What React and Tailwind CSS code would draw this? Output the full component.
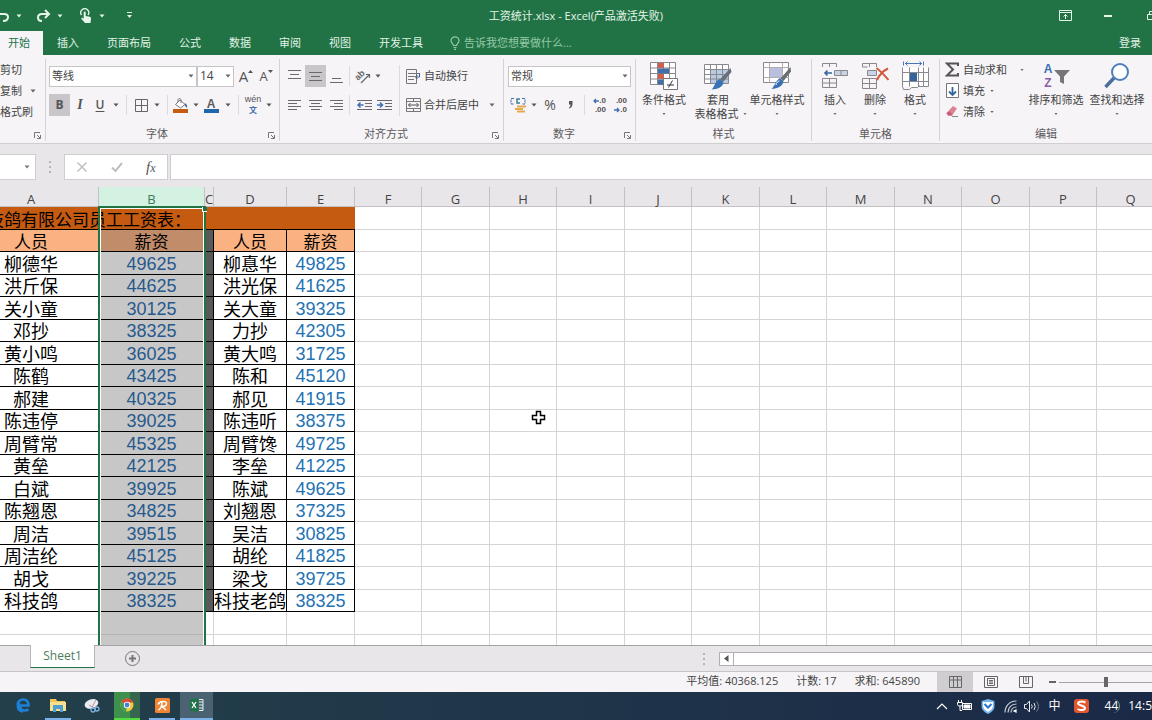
import { useState } from "react";
import { clsx } from "clsx";

const columns = ["A", "B", "C", "D", "E", "F", "G", "H", "I", "J", "K", "L", "M", "N", "O", "P", "Q"];
const emptyColumns = columns.slice(5);

const staff = [
  ["柳德华", 49625, "柳惪华", 49825],
  ["洪斤保", 44625, "洪光保", 41625],
  ["关小童", 30125, "关大童", 39325],
  ["邓抄", 38325, "力抄", 42305],
  ["黄小鸣", 36025, "黄大鸣", 31725],
  ["陈鹤", 43425, "陈和", 45120],
  ["郝建", 40325, "郝见", 41915],
  ["陈违停", 39025, "陈违听", 38375],
  ["周臂常", 45325, "周臂馋", 49725],
  ["黄垒", 42125, "李垒", 41225],
  ["白斌", 39925, "陈斌", 49625],
  ["陈翘恩", 34825, "刘翘恩", 37325],
  ["周洁", 39515, "吴洁", 30825],
  ["周洁纶", 45125, "胡纶", 41825],
  ["胡戈", 39225, "梁戈", 39725],
  ["科技鸽", 38325, "科技老鸽", 38325],
];

const tabs = ["插入", "页面布局", "公式", "数据", "审阅", "视图", "开发工具"];

/* ================= SMALL PARTS ================= */
function Caret({ className = "w-3" }) {
  return (
    <svg viewBox="0 0 12 6" className={clsx("h-[6px] shrink-0", className)} fill="currentColor" aria-hidden="true">
      <path d="M3.5 1.5h5L6 4.5z" />
    </svg>
  );
}

function TinyCaret() {
  return (
    <svg viewBox="0 0 6 4" className="h-1 w-[6px] shrink-0" fill="#666" aria-hidden="true">
      <path d="M1.5 1h3L3 3z" />
    </svg>
  );
}

function Divider({ className = "mx-1" }) {
  return <span className={clsx("h-5 w-px shrink-0 bg-[#dcdadd]", className)} />;
}

function IconButton({ label, className = "w-5", active, children }) {
  return (
    <button
      type="button"
      aria-label={label}
      className={clsx("flex h-[22px] shrink-0 items-center justify-center", active && "bg-[#c8c6c9]", className)}
    >
      {children}
    </button>
  );
}

function BigButton({ label, label2, className, children }) {
  return (
    <button type="button" className={clsx("flex shrink-0 flex-col items-center leading-[14px] whitespace-nowrap", className)}>
      <span className="mb-[2px] flex h-[30px] items-center">{children}</span>
      <span>{label}</span>
      <span className="flex h-[14px] items-center gap-[3px]">
        {label2}
        <TinyCaret />
      </span>
    </button>
  );
}

function Group({ title, launcher, className, children }) {
  return (
    <section className={clsx("flex shrink-0 flex-col border-r border-[#d5d3d6]", className)}>
      <div className="min-h-0 flex-1">{children}</div>
      <div className="flex h-[15px] items-center text-[#5c5a5d]">
        <span className="flex-1 text-center leading-[15px]">{title}</span>
        {launcher && (
          <button type="button" aria-label={title + "设置"} className="mr-1 pt-1">
            <svg width="7" height="7" viewBox="0 0 7 7" fill="none" stroke="#77757a" aria-hidden="true">
              <path d="M.5 6V.5H6M3 3l3 3M6.500 3v3.500H3" />
            </svg>
          </button>
        )}
      </div>
    </section>
  );
}

function DropDown({ label, value, options, onChange, className }) {
  return (
    <span className={clsx("relative flex h-[22px] items-center", className)}>
      <select
        aria-label={label}
        value={value}
        onChange={(e) => onChange(e.target.value)}
        className="h-[21px] w-full appearance-none rounded-none border border-[#c6c4c8] bg-white pl-[2px] text-[#444] outline-none"
      >
        {options.map((o) => (
          <option key={o}>{o}</option>
        ))}
      </select>
      <Caret className="pointer-events-none absolute right-0 w-3 text-[#666]" />
    </span>
  );
}

function Lines({ rows }) {
  return (
    <svg width="14" height="13" viewBox="0 0 14 13" stroke="#6b696d" aria-hidden="true">
      {rows.map(([x1, x2, y]) => (
        <path key={y} d={`M${x1} ${y + 0.5}H${x2}`} />
      ))}
    </svg>
  );
}

/* ================= TITLE BAR ================= */
function TitleBar() {
  return (
    <header className="grid h-[31px] shrink-0 grid-cols-[1fr_auto_1fr] items-center overflow-hidden text-[#e6f5e9]">
      <div className="flex items-center">
        <button type="button" aria-label="撤消" className="flex w-[13px] items-center">
          <svg width="10" height="14" viewBox="0 0 10 14" fill="none" stroke="currentColor" strokeWidth="2" aria-hidden="true">
            <path d="M-4 5h8c3 0 4 1.500 4 3s-1 4-5 4" />
          </svg>
        </button>
        <Caret />
        <button type="button" aria-label="恢复" className="ml-2 flex w-[21px] justify-center">
          <svg width="15" height="14" viewBox="0 0 15 14" fill="none" stroke="currentColor" strokeWidth="2" aria-hidden="true">
            <path d="M12 5H6C3 5 2 6.500 2 8.500S3.500 12 6 12" />
            <path d="M9 1l4 4-4 4" />
          </svg>
        </button>
        <Caret />
        <button type="button" aria-label="触摸/鼠标模式" className="ml-[10px] flex w-5 justify-center">
          <svg width="14" height="16" viewBox="0 0 14 16" aria-hidden="true">
            <path d="M2.500 7a4 4 0 1 1 6.500 0" fill="none" stroke="currentColor" strokeWidth="1.300" />
            <path d="M4.700 4.500c0-1.300 2-1.300 2 0V8l4 .8c1 .3 1.300.8 1.300 1.700L11.500 15H6L2.500 11c-.6-1 .5-1.700 1.200-1l1 .8z" fill="currentColor" />
          </svg>
        </button>
        <Caret />
        <button type="button" aria-label="自定义快速访问工具栏" className="ml-[15px] flex w-3 justify-center">
          <svg width="7" height="7" viewBox="0 0 7 7" fill="currentColor" aria-hidden="true">
            <path d="M1 0h5v1H1zM1 3h5L3.500 6z" />
          </svg>
        </button>
      </div>
      <h1>工资统计.xlsx - Excel(产品激活失败)</h1>
      <div className="flex items-center justify-end">
        <button type="button" aria-label="功能区显示选项" className="mr-8">
          <svg width="13" height="11" viewBox="0 0 13 11" fill="none" stroke="currentColor" aria-hidden="true">
            <path d="M.5.5h12v10H.5zM.5 2.500h12M6.500 9V4.500M4.500 6.500l2-2 2 2" />
          </svg>
        </button>
        <button type="button" aria-label="最小化" className="mr-[34px] flex h-3 w-[9px] items-center">
          <span className="h-[2px] w-2 bg-[#e6f5e9]" />
        </button>
        <button type="button" aria-label="还原" className="w-[5px] overflow-hidden">
          <svg width="11" height="11" viewBox="0 0 11 11" className="max-w-none" fill="none" stroke="currentColor" aria-hidden="true">
            <path d="M.5 4.500h7v5h-7zM2.500 4V1.500h7v5H8" />
          </svg>
        </button>
      </div>
    </header>
  );
}

function TabBar() {
  return (
    <nav className="flex h-6 shrink-0 items-stretch text-[#e2f3e5]">
      <button type="button" className="bg-[#f6f4f7] pr-[13px] pl-2 text-[#217346]">开始</button>
      {tabs.map((t) => (
        <button key={t} type="button" className="px-[14px]">
          {t}
        </button>
      ))}
      <label className="ml-[13px] flex items-center gap-1 text-[#95c9a5]">
        <svg width="10" height="14" viewBox="0 0 10 14" fill="none" stroke="currentColor" strokeWidth="1.200" aria-hidden="true">
          <path d="M3.500 9.500C3.500 8 1 7 1 4.800a4 4 0 0 1 8 0C9 7 6.500 8 6.500 9.500zM3.500 11.500h3M4 13.300h2" />
        </svg>
        <input
          type="text"
          aria-label="操作说明搜索"
          placeholder="告诉我您想要做什么..."
          className="w-32 bg-transparent outline-none placeholder:text-[#95c9a5]"
        />
      </label>
      <a href="#login" className="mr-[11px] ml-auto self-center">登录</a>
    </nav>
  );
}

/* ================= RIBBON ================= */
function FontGroup() {
  const [font, setFont] = useState("等线");
  const [size, setSize] = useState("14");
  return (
    <Group title="字体" launcher className="w-[234px]">
      <div className="flex flex-col gap-[7px] pt-[6px] pl-[3px]">
        <div className="flex">
          <DropDown label="字体" value={font} options={["等线", "宋体", "黑体"]} onChange={setFont} className="w-[148px]" />
          <DropDown label="字号" value={size} options={["11", "12", "14"]} onChange={setSize} className="w-[37px] text-[12px]" />
          <IconButton label="增大字号" className="ml-[2px] w-5 text-[#555]">
            <span className="text-[15px] leading-5">A</span>
            <svg width="5" height="14" viewBox="0 0 5 14" fill="#555" aria-hidden="true">
              <path d="M0 4h5L2.500 1z" />
            </svg>
          </IconButton>
          <IconButton label="减小字号" className="w-5 text-[#555]">
            <span className="text-[13px] leading-5">A</span>
            <svg width="5" height="14" viewBox="0 0 5 14" fill="#555" aria-hidden="true">
              <path d="M0 1h5L2.500 4z" />
            </svg>
          </IconButton>
        </div>
        <div className="flex items-center text-[#555]">
          <IconButton label="加粗" active className="w-[21px]"><b className="text-[12px]">B</b></IconButton>
          <IconButton label="倾斜"><i className="font-['Liberation_Serif',serif] text-[14px] font-bold">I</i></IconButton>
          <IconButton label="下划线"><span className="text-[12px] font-semibold underline underline-offset-2">U</span></IconButton>
          <Caret />
          <Divider />
          <IconButton label="边框">
            <svg width="13" height="13" viewBox="0 0 13 13" fill="none" stroke="#666" aria-hidden="true">
              <path d="M.5.5h12v12H.5zM6.500.5v12M.5 6.500h12" />
            </svg>
          </IconButton>
          <Caret />
          <Divider />
          <IconButton label="填充颜色" className="w-[18px]">
            <svg width="16" height="15" viewBox="0 0 16 15" aria-hidden="true">
              <path d="M0 11h15v4H0z" fill="#c55a11" />
              <path d="M2.500 6.500L7 2l5 4.500L7.500 10z" fill="#fff" stroke="#777" />
              <path d="M5 4V2c0-2 3-2 3 0v3" fill="none" stroke="#777" />
              <path d="M12 5c2 1 2.500 3 2 5l-2-2z" fill="#4a6fa5" />
            </svg>
          </IconButton>
          <Caret />
          <IconButton label="字体颜色">
            <svg width="16" height="16" viewBox="0 0 16 16" className="font-['Liberation_Sans',sans-serif]" aria-hidden="true">
              <path d="M0 12h15v4H0z" fill="#1f66ad" />
              <text x="7" y="11" textAnchor="middle" fontSize="12" fontWeight="700" fill="#5a5a60">A</text>
            </svg>
          </IconButton>
          <Caret />
          <Divider />
          <IconButton label="显示拼音字段" className="w-5 flex-col">
            <span className="font-['Liberation_Sans',sans-serif] text-[9px] leading-[10px]">wén</span>
            <span className="font-['Noto_Sans_CJK_SC',sans-serif] text-[8px] leading-[12px] font-bold text-[#3f6fb0]">文</span>
          </IconButton>
          <Caret />
        </div>
      </div>
    </Group>
  );
}

function AlignGroup() {
  return (
    <Group title="对齐方式" launcher className="w-[224px]">
      <div className="flex pt-[6px] pl-1">
        <div className="flex w-[116px] flex-col gap-[7px] border-r border-[#dcdadd] text-[#555]">
          <div className="flex items-center">
            <IconButton label="顶端对齐" className="w-[21px]"><Lines rows={[[0, 13, 0], [2, 11, 4], [0, 13, 8]]} /></IconButton>
            <IconButton label="垂直居中" active className="w-[21px]"><Lines rows={[[0, 13, 2], [2, 11, 6], [0, 13, 10]]} /></IconButton>
            <IconButton label="底端对齐" className="w-[21px]"><Lines rows={[[2, 11, 8], [0, 13, 12]]} /></IconButton>
            <Divider className="mx-[2px]" />
            <IconButton label="方向" className="w-5">
              <svg width="20" height="18" viewBox="0 0 20 18" fill="none" stroke="#666" strokeWidth="1.200" className="font-['Liberation_Sans',sans-serif]" aria-hidden="true">
                <text transform="translate(6 14) rotate(-45)" fontSize="9" fontWeight="700" fill="#666" stroke="none">ab</text>
                <path d="M9 16L17.500 7.500M14 7.500h3.500V11" />
              </svg>
            </IconButton>
            <Caret />
          </div>
          <div className="flex items-center">
            <IconButton label="左对齐" className="w-[21px]"><Lines rows={[[0, 13, 1], [0, 9, 4], [0, 13, 7], [0, 9, 10]]} /></IconButton>
            <IconButton label="居中" className="w-[21px]"><Lines rows={[[0, 13, 1], [2, 11, 4], [0, 13, 7], [2, 11, 10]]} /></IconButton>
            <IconButton label="右对齐" className="w-[21px]"><Lines rows={[[0, 13, 1], [4, 13, 4], [0, 13, 7], [4, 13, 10]]} /></IconButton>
            <Divider className="mx-[2px]" />
            <IconButton label="减少缩进量" className="w-6">
              <svg width="15" height="13" viewBox="0 0 15 13" fill="none" stroke="#6b696d" aria-hidden="true">
                <path d="M0 1.500h15M8 4.500h7M8 7.500h7M0 10.500h15" />
                <path d="M6.500 6H1M3.500 3.500L1 6l2.500 2.500" stroke="#3f6fb0" strokeWidth="1.500" />
              </svg>
            </IconButton>
            <IconButton label="增加缩进量" className="w-4">
              <svg width="15" height="13" viewBox="0 0 15 13" fill="none" stroke="#6b696d" aria-hidden="true">
                <path d="M0 1.500h15M8 4.500h7M8 7.500h7M0 10.500h15" />
                <path d="M0 6h5.500M3 3.500L5.500 6 3 8.500" stroke="#3f6fb0" strokeWidth="1.500" />
              </svg>
            </IconButton>
          </div>
        </div>
        <div className="flex flex-col gap-[7px] pl-[6px]">
          <button type="button" className="flex h-[22px] items-center gap-[3px]">
            <svg width="15" height="15" viewBox="0 0 15 15" fill="none" stroke="#77757a" aria-hidden="true">
              <path d="M.5.5h10v14H.5zM2 4.500h11M2 7.500h7M2 10.500h6" />
              <path d="M13.500 4v4H9.500M11.500 6L9.500 8l2 2" stroke="#3f5f95" />
            </svg>
            自动换行
          </button>
          <button type="button" className="flex h-[22px] items-center gap-[3px]">
            <svg width="15" height="14" viewBox="0 0 15 14" fill="none" stroke="#77757a" aria-hidden="true">
              <path d="M.5.5h14v13H.5zM.5 3.500h14M.5 10.500h14M7.500.5v3M7.500 10.500v3" />
              <path d="M2.500 7h10M4.500 5l-2 2 2 2M10.500 5l2 2-2 2" stroke="#555" />
            </svg>
            合并后居中
            <Caret className="ml-1 w-3 text-[#666]" />
          </button>
        </div>
      </div>
    </Group>
  );
}

function NumberGroup() {
  const [format, setFormat] = useState("常规");
  return (
    <Group title="数字" launcher className="w-[132px]">
      <div className="flex flex-col gap-[7px] pt-[6px] pr-1 pl-1">
        <DropDown label="数字格式" value={format} options={["常规", "数值", "货币"]} onChange={setFormat} className="w-full" />
        <div className="flex items-center text-[#555]">
          <IconButton label="会计数字格式">
            <svg width="17" height="16" viewBox="0 0 17 16" fill="none" aria-hidden="true">
              <path d="M4 1.500H1V7h3M12 1.500h3V7h-3" stroke="#3f6fb0" strokeDasharray="3 1" />
              <path d="M10 2H7v4h3" stroke="#3b7f9c" strokeWidth="1.500" />
              <path d="M7 9.500h9M5 12h8M7 14.500h8" stroke="#e5a950" strokeWidth="2" />
            </svg>
          </IconButton>
          <Caret />
          <IconButton label="百分比样式"><span className="text-[14px]">%</span></IconButton>
          <IconButton label="千位分隔样式">
            <svg width="5" height="8" viewBox="0 0 5 8" fill="#555" aria-hidden="true">
              <path d="M1 0h3.500v3C4.500 5.500 3 7 1 7.500V6.500C2.200 6 2.500 5 2.500 3.500H1z" />
            </svg>
          </IconButton>
          <Divider />
          <IconButton label="增加小数位数" className="w-5 flex-col items-end pr-[3px] font-['Liberation_Sans',sans-serif] text-[8px] leading-[9px] font-bold">
            <span className="flex items-center">
              <svg width="6" height="6" viewBox="0 0 6 6" fill="none" stroke="#3f6fb0" strokeWidth="1.300" aria-hidden="true"><path d="M6 3H1M3 1L1 3l2 2" /></svg>
              .0
            </span>
            <span>.00</span>
          </IconButton>
          <IconButton label="减少小数位数" className="w-5 flex-col items-end pr-[2px] font-['Liberation_Sans',sans-serif] text-[8px] leading-[9px] font-bold">
            <span>.00</span>
            <span className="flex items-center">
              <svg width="6" height="6" viewBox="0 0 6 6" fill="none" stroke="#3f6fb0" strokeWidth="1.300" aria-hidden="true"><path d="M0 3h5M3 1l2 2-2 2" /></svg>
              .0
            </span>
          </IconButton>
        </div>
      </div>
    </Group>
  );
}

function StyleGroup() {
  return (
    <Group title="样式" className="w-[176px]">
      <div className="flex pt-[2px] pl-[2px]">
        <BigButton label="条件格式" className="w-[52px]">
          <svg width="28" height="28" viewBox="0 0 28 28" fill="none" aria-hidden="true">
            <path d="M.5.5h25v22H.5z" fill="#fff" />
            <path d="M.5.500h25v22H.5zM7.500.5v22M19.500.5v22M.5 6h25M.5 11.500h25M.5 17h25M13.500.5v22" stroke="#8a888c" />
            <path d="M8 1h6v5H8zM8 12h6v5H8z" fill="#cf5f4c" />
            <path d="M8 6.500h11v5H8zM8 17.500h6v5H8z" fill="#3f6fa8" />
            <path d="M13.500 16.500h14v11h-14z" fill="#fff" stroke="#777" />
            <path d="M17 23h7M22.500 18.500l-4 7" stroke="#333" />
          </svg>
        </BigButton>
        <BigButton label="套用" label2={<span className="pl-[6px]">表格格式</span>} className="w-[56px]">
          <svg width="30" height="28" viewBox="0 0 30 28" fill="none" aria-hidden="true">
            <path d="M1.500 2.500h24v19h-24z" fill="#fff" />
            <path d="M8 7h17v14H8z" fill="#b9cbe3" />
            <path d="M1.500 2.500h24v19h-24zM7.500 2.500v19M13.500 2.500v19M19.500 2.500v19M1.500 7.500h24M1.500 12.500h24M1.500 17h24" stroke="#8a888c" />
            <path d="M27.500 6L28.500 10 20 20l-3-2.500z" fill="#66707c" />
            <path d="M16.500 17l4 3.500c-1 5-6 6.500-12 7 3-2 3-8 8-10.500z" fill="#3674b5" />
          </svg>
        </BigButton>
        <BigButton label="单元格样式" className="w-[62px]">
          <svg width="30" height="28" viewBox="0 0 30 28" fill="none" aria-hidden="true">
            <path d="M1.500.5h25v20h-25z" fill="#fff" stroke="#8a888c" />
            <path d="M7.500.5v20M1.500 5.500h25M1.500 15.500h25M20.500.5v20" stroke="#b0aeb2" />
            <path d="M8 6h12v9H8z" fill="#b9bfdc" />
            <path d="M28.500 5L29 9.500 21.500 19l-3-2.500z" fill="#6a6d72" />
            <path d="M18 16l3.500 3.500c-1 5-6 7-12 7.500 3-2 3.500-8 8.500-11z" fill="#3b6fb3" />
            <path d="M14 23c0-2 2-4 3.500-4" stroke="#fff" />
          </svg>
        </BigButton>
      </div>
    </Group>
  );
}

function CellGroup() {
  return (
    <Group title="单元格" className="w-[128px]">
      <div className="flex pt-[2px] pl-[3px]">
        <BigButton label="插入" className="w-10">
          <svg width="26" height="28" viewBox="0 0 26 28" fill="none" stroke="#8a888c" aria-hidden="true">
            <path d="M.5 5V1.500h14V5M7.500 1.500V5M.5 16.500h14v9H.5zM7.500 16.500v9M.5 21h14" />
            <path d="M12.500 8.500h13v5h-13zM19 8.500v5" fill="#c9d3e6" />
            <path d="M10 11H3M5.500 8.500L3 11l2.500 2.500" stroke="#35649b" strokeWidth="1.600" />
          </svg>
        </BigButton>
        <BigButton label="删除" className="w-10">
          <svg width="28" height="28" viewBox="0 0 28 28" fill="none" stroke="#8a888c" aria-hidden="true">
            <path d="M1.500 5V1.500h14V5M8.500 1.500V5M1.500 16.500h14v10h-14zM8.500 16.500v10M1.500 21.500h14M1.500 5h5" />
            <path d="M6.500 8.500h9v5h-9z" fill="#c9d3e6" />
            <path d="M15.500 6c4 3 8 7 12 12M27 6.500c-4 2-9 7-11 11.500" stroke="#d5573b" strokeWidth="2" />
          </svg>
        </BigButton>
        <BigButton label="格式" className="w-10">
          <svg width="27" height="30" viewBox="0 0 27 30" fill="none" stroke="#8a888c" aria-hidden="true">
            <path d="M.5 6.500h26v19H.5z" fill="#fff" stroke="none" />
            <path d="M.5 6.500v19M26.500 6.500v19M7.500 6.500v19M16.500 6.500v19M21.500 6.500v19M.5 11.500h26M.5 20.500h26M16.500 25.500h10" />
            <path d="M8 12h7v8H8z" fill="#35649b" stroke="none" />
            <path d="M.5 25.500l1 3h6l2-2h6l2-2" />
            <path d="M1.500.5v4M21.500.5v4M3 2.500h17M5.500.5l-2 2 2 2M17.500.5l2 2-2 2" stroke="#4676b5" />
          </svg>
        </BigButton>
      </div>
    </Group>
  );
}

function EditGroup() {
  return (
    <Group title="编辑" className="min-w-[212px] flex-1 border-r-0">
      <div className="flex">
        <div className="flex w-[85px] flex-col pl-[5px]">
          <button type="button" className="flex h-[21px] items-center gap-[3px] whitespace-nowrap">
            <svg width="15" height="15" viewBox="0 0 15 15" fill="none" stroke="#555" strokeWidth="2" aria-hidden="true">
              <path d="M13 4V1.500H2L8 7.500l-6 6h11V11" />
            </svg>
            自动求和
            <span className="ml-auto pl-[6px]"><TinyCaret /></span>
          </button>
          <button type="button" className="flex h-[21px] items-center gap-[3px]">
            <svg width="15" height="15" viewBox="0 0 15 15" fill="none" stroke="#77757a" aria-hidden="true">
              <path d="M1.500.5h12v14h-12z" fill="#fff" />
              <path d="M7.500 4v8M4 8.500L7.500 12 11 8.500" stroke="#35649b" strokeWidth="1.800" />
            </svg>
            填充
            <Caret className="w-2 text-[#666]" />
          </button>
          <button type="button" className="flex h-[21px] items-center gap-[3px]">
            <svg width="15" height="13" viewBox="0 0 15 13" aria-hidden="true">
              <path d="M8 1l4 2.500L7 10.500H3L1.500 8z" fill="#dd8295" />
              <path d="M1.500 8l3.500-1.500 2.500 3.500-.5.500H3z" fill="#c75d76" />
              <path d="M7 11.500h6" stroke="#888" />
            </svg>
            清除
            <Caret className="w-2 text-[#666]" />
          </button>
        </div>
        <BigButton label="排序和筛选" className="mt-[2px] w-[62px]">
          <svg width="28" height="28" viewBox="0 0 28 28" className="font-['Liberation_Sans',sans-serif]" aria-hidden="true">
            <text x="6" y="11" textAnchor="middle" fontSize="12" fontWeight="700" fill="#3a70b2">A</text>
            <text x="6" y="25" textAnchor="middle" fontSize="12" fontWeight="700" fill="#8d5ea8">Z</text>
            <path d="M12 8h16l-6 6.500V22l-4-2v-5.500z" fill="#77757a" />
          </svg>
        </BigButton>
        <BigButton label="查找和选择" className="mt-[2px] w-[60px]">
          <svg width="28" height="28" viewBox="0 0 28 28" fill="none" aria-hidden="true">
            <circle cx="17" cy="10" r="8" fill="#fff" stroke="#4e7fb8" strokeWidth="2" />
            <path d="M11 16L2.500 25" stroke="#4a6f9f" strokeWidth="3.500" />
          </svg>
        </BigButton>
      </div>
    </Group>
  );
}

function Ribbon() {
  return (
    <div className="flex h-[89px] shrink-0 border-b border-[#d0ced1] bg-[#f6f4f7] pt-1 pb-[2px] text-[#444]">
      <Group launcher className="w-[46px]" title="">
        <button type="button" className="flex h-[21px] items-center">剪切</button>
        <button type="button" className="flex h-[21px] items-center">
          复制
          <Caret className="ml-[5px] w-3 text-[#666]" />
        </button>
        <button type="button" className="flex h-[21px] items-center">格式刷</button>
      </Group>
      <FontGroup />
      <AlignGroup />
      <NumberGroup />
      <StyleGroup />
      <CellGroup />
      <EditGroup />
    </div>
  );
}

function FormulaBar() {
  return (
    <div className="flex shrink-0 items-stretch pt-[10px] pb-[7px]">
      <button type="button" aria-label="名称框" className="flex h-[26px] w-9 items-center justify-end border border-l-0 border-[#cfcdd0] bg-white pr-[2px] text-[#777]">
        <Caret />
      </button>
      <div className="flex w-7 flex-col items-center justify-center gap-[3px]">
        <i className="size-[2px] bg-[#b5b3b6]" />
        <i className="size-[2px] bg-[#b5b3b6]" />
        <i className="size-[2px] bg-[#b5b3b6]" />
      </div>
      <div className="flex w-[104px] items-center justify-around border border-[#cfcdd0] bg-white">
        <button type="button" aria-label="取消">
          <svg width="12" height="12" viewBox="0 0 12 12" fill="none" stroke="#c0bec1" strokeWidth="1.500" aria-hidden="true">
            <path d="M1.500 1.500l9 9M10.500 1.500l-9 9" />
          </svg>
        </button>
        <button type="button" aria-label="输入">
          <svg width="12" height="12" viewBox="0 0 12 12" fill="none" stroke="#c0bec1" strokeWidth="2" aria-hidden="true">
            <path d="M1 6.500L4.500 10 11 2" />
          </svg>
        </button>
        <button type="button" aria-label="插入函数" className="font-['Liberation_Serif',serif] text-[15px] leading-5 text-[#555] italic">
          f<span className="text-[12px]">x</span>
        </button>
      </div>
      <input type="text" aria-label="编辑栏" className="ml-[2px] min-w-0 flex-1 border border-r-0 border-[#cfcdd0] bg-white px-2 outline-none" />
    </div>
  );
}

/* ================= WORKSHEET ================= */
const line = "border-r border-b border-[#d6d4d7]";
const boxed = "border-r border-b border-black";
const heading = "bg-[#fab283] text-[17px]";
const amount = "font-['Liberation_Sans',sans-serif]";

function Row({ index, children }) {
  return <tr className={index % 2 ? "h-[22px]" : "h-[23px]"}>{children}</tr>;
}

function EmptyCells() {
  return emptyColumns.map((c) => <td key={c} className={line} />);
}

function Sheet() {
  return (
    <main className="relative min-h-0 flex-1 overflow-hidden bg-white">
      <div className="relative -ml-9 w-max">
        <table className="w-[1200px] table-fixed border-separate border-spacing-0 text-center text-[18px] leading-[19px] whitespace-nowrap text-black [&_td]:p-0 [&_td]:pt-[2px]">
          <colgroup>
            <col className="w-[135px]" />
            <col className="w-[106px]" />
            <col className="w-[9px]" />
            <col className="w-[73px]" />
            <col className="w-[68px]" />
            {emptyColumns.map((c, i) => (
              <col key={c} className={i % 2 ? "w-[68px]" : "w-[67px]"} />
            ))}
          </colgroup>
          <thead>
            <tr className="h-5 bg-[#e9e6ea] text-[13px] text-[#444]">
              {columns.map((c) => (
                <th
                  key={c}
                  scope="col"
                  className={clsx(
                    "border-r border-b border-[#c3c1c4] p-0 pt-[5px] leading-[14px] font-normal",
                    c === "B" && "bg-[#d3f2e1] text-[#3f7a5c]"
                  )}
                >
                  {c}
                </th>
              ))}
            </tr>
          </thead>
          <tbody>
            <Row index={0}>
              <td colSpan={5} className="border-b border-black bg-[#c55a11] text-left text-[17px]">
                <span className="pl-[6px]">科技鸽有限公司员工工资表：</span>
              </td>
              <EmptyCells />
            </Row>
            <Row index={1}>
              <td className={clsx(boxed, heading)}>人员</td>
              <td className={clsx(boxed, "bg-[#c08c69] text-[17px]")}>薪资</td>
              <td className={clsx(boxed, "bg-[#595959]")} />
              <td className={clsx(boxed, heading)}>人员</td>
              <td className={clsx(boxed, heading)}>薪资</td>
              <EmptyCells />
            </Row>
            {staff.map(([nameA, payB, nameD, payE], i) => (
              <Row key={i} index={i}>
                <td className={boxed}>{nameA}</td>
                <td className={clsx(boxed, amount, "bg-[#c8c7c8] text-[#26598c]")}>{payB}</td>
                <td className={clsx(boxed, "bg-[#595959]")} />
                <td className={boxed}>{nameD}</td>
                <td className={clsx(boxed, amount, "text-[#2372b3]")}>{payE}</td>
                <EmptyCells />
              </Row>
            ))}
            {[0, 1].map((i) => (
              <Row key={i} index={i}>
                <td className={line} />
                <td className="border-b border-[#b4b3b4] bg-[#c8c7c8]" />
                <td className={line} />
                <td className={line} />
                <td className={line} />
                <EmptyCells />
              </Row>
            ))}
          </tbody>
        </table>
        {/* selection frame of column B with its fill handle */}
        <div className="pointer-events-none absolute top-[19px] bottom-0 left-[134px] w-[108px] border-2 border-b-0 border-[#217346] inset-shadow-[0_0_0_1px_#fff]">
          <span className="absolute -top-px -right-[3px] size-[5px] border-b border-l border-white bg-[#217346]" />
        </div>
      </div>
      <svg className="pointer-events-none absolute top-[223px] left-[531px]" width="16" height="16" viewBox="0 0 16 16" aria-hidden="true">
        <path d="M5.500 1.500h4v4h4v4h-4v4h-4v-4h-4v-4h4z" fill="#fff" stroke="#000" strokeWidth="1.500" />
      </svg>
    </main>
  );
}

function SheetBar() {
  return (
    <div className="flex h-[27px] shrink-0 border-b border-[#c6c4c7] bg-[#e9e6ea]">
      <div className="w-[30px] border-t border-[#a5a3a6]" />
      <button type="button" className="mb-[3px] w-[65px] border-x border-b border-x-[#b5b3b6] border-b-[#217346] bg-white text-[12px] text-[#4c7d5b]">
        Sheet1
      </button>
      <div className="flex flex-1 items-center border-t border-[#a5a3a6]">
        <button type="button" aria-label="新工作表" className="ml-[29px]">
          <svg width="17" height="17" viewBox="0 0 17 17" fill="none" stroke="#77757a" aria-hidden="true">
            <circle cx="8.500" cy="8.500" r="7" />
            <path d="M8.500 5v7M5 8.500h7" strokeWidth="2" />
          </svg>
        </button>
        <div className="mr-[14px] ml-auto flex flex-col gap-[3px]">
          <i className="size-[2px] bg-[#b5b3b6]" />
          <i className="size-[2px] bg-[#b5b3b6]" />
          <i className="size-[2px] bg-[#b5b3b6]" />
        </div>
        <button type="button" aria-label="向左滚动" className="flex h-[14px] w-[15px] items-center justify-center border border-[#b0aeb1] bg-white">
          <svg width="5" height="7" viewBox="0 0 5 7" fill="#555" aria-hidden="true"><path d="M4.500 0v7L0 3.500z" /></svg>
        </button>
        <div className="h-[14px] w-[418px] border-y border-[#b0aeb1] bg-white" />
      </div>
    </div>
  );
}

function StatusBar() {
  const [zoom, setZoom] = useState(50);
  return (
    <div className="flex h-5 shrink-0 items-center justify-end bg-[#f6f4f7] whitespace-nowrap text-[#444]">
      <div className="mr-[17px] flex gap-[18px] pb-[2px]">
        <span>平均值: 40368.125</span>
        <span>计数: 17</span>
        <span>求和: 645890</span>
      </div>
      <button type="button" aria-label="普通" className="flex h-5 w-9 items-center justify-center bg-[#cfcdd0]">
        <svg width="13" height="12" viewBox="0 0 13 12" fill="none" stroke="#666" aria-hidden="true"><path d="M.5.5h12v11H.5zM.5 4h12M4.500.5v11M8.500 .5v11" /></svg>
      </button>
      <button type="button" aria-label="页面布局" className="flex h-5 w-9 items-center justify-center">
        <svg width="14" height="12" viewBox="0 0 14 12" fill="none" stroke="#666" aria-hidden="true"><path d="M.5.5h13v11H.5zM3.500 2.500h7v7h-7zM5 4.500h4M5 6h4M5 7.500h4" /></svg>
      </button>
      <button type="button" aria-label="分页预览" className="flex h-5 w-[34px] items-center justify-center">
        <svg width="14" height="12" viewBox="0 0 14 12" fill="none" stroke="#666" aria-hidden="true"><path d="M.5.5h13v11H.5zM4.500 .5v7h5v-7M7 .5v5" /></svg>
      </button>
      <button type="button" aria-label="缩小" className="mr-[3px] ml-[6px] h-[2px] w-[7px] bg-[#666]" />
      <input
        type="range"
        aria-label="显示比例"
        value={zoom}
        onChange={(e) => setZoom(Number(e.target.value))}
        className="h-4 w-[93px] appearance-none bg-transparent [&::-webkit-slider-runnable-track]:h-px [&::-webkit-slider-runnable-track]:bg-[#a5a3a6] [&::-webkit-slider-thumb]:-mt-[5px] [&::-webkit-slider-thumb]:h-[10px] [&::-webkit-slider-thumb]:w-1 [&::-webkit-slider-thumb]:appearance-none [&::-webkit-slider-thumb]:bg-[#666]"
      />
    </div>
  );
}

/* ================= TASKBAR ================= */
function TaskButton({ label, className, children }) {
  return (
    <button type="button" aria-label={label} className={clsx("flex h-7 items-center justify-center border-b-2", className)}>
      {children}
    </button>
  );
}

function TaskBar() {
  return (
    <footer className="flex h-7 shrink-0 items-center bg-linear-to-r from-[#23404a] to-[#1b2947] text-white">
      <TaskButton label="Edge" className="ml-[9px] w-7 border-transparent">
        <svg width="14" height="15" viewBox="0 0 14 15" fill="none" stroke="#1d7fd6" strokeWidth="2.600" aria-hidden="true">
          <path d="M1.500 7C2 3 4 1.500 7.300 1.500c3.500 0 5.200 2.500 5.200 6H4c0 3 2 5 4.500 5 1.500 0 2.800-.4 4-1M3.500 4.500C1 7 1 13 7 13.500" />
        </svg>
      </TaskButton>
      <TaskButton label="文件资源管理器" className="ml-2 w-[26px] border-[#7cb0ea]">
        <svg width="16" height="14" viewBox="0 0 16 14" aria-hidden="true">
          <path d="M0 1h6l1 2h8v10H0z" fill="#f0c75a" />
          <path d="M0 4h16v9H0z" fill="#f9e08d" />
          <path d="M3 7h10v7h-3v-3H6v3H3z" fill="#4c9fd0" />
        </svg>
      </TaskButton>
      <TaskButton label="截图工具" className="ml-2 w-[26px] border-transparent">
        <svg width="16" height="15" viewBox="0 0 16 15" aria-hidden="true">
          <ellipse cx="7.500" cy="6" rx="7" ry="4.500" fill="#e9edf2" transform="rotate(-18 7 6)" />
          <path d="M5 7l7 4M12 2L8 9" stroke="#c98a90" />
          <circle cx="13" cy="11" r="2" fill="none" stroke="#7fb0e0" strokeWidth="1.300" />
          <circle cx="9" cy="12" r="2" fill="none" stroke="#7fb0e0" strokeWidth="1.300" />
        </svg>
      </TaskButton>
      <TaskButton label="Chrome" className="ml-[9px] w-[26px] border-[#4fdc3c] bg-linear-to-r from-[#3f8f4d] from-60% to-[#37664f] to-60%">
        <svg width="14" height="14" viewBox="0 0 14 14" aria-hidden="true">
          <circle cx="7" cy="7" r="6.500" fill="#f3c93c" />
          <path d="M7 7L1.200 4A6.500 6.500 0 0 1 13 4.500H7z" fill="#d9493a" />
          <path d="M7 7L1.200 4a6.500 6.500 0 0 0 5 9.500z" fill="#3f9f58" />
          <circle cx="7" cy="7" r="3.200" fill="#fff" />
          <circle cx="7" cy="7" r="2.400" fill="#4a7fd6" />
        </svg>
      </TaskButton>
      <TaskButton label="录屏" className="ml-[9px] w-[26px] border-[#7cb0ea]">
        <svg width="15" height="15" viewBox="0 0 15 15" fill="none" aria-hidden="true">
          <rect width="15" height="15" rx="1.500" fill="#ee8434" />
          <path d="M3 6.500C4.500 3 11 2.500 11.500 5.500c.3 2-2 3-4.500 3l4 3.500M7 4.500c0 3-1 6-3.500 7.500" stroke="#fff" strokeWidth="1.500" />
        </svg>
      </TaskButton>
      <TaskButton label="Excel" className="ml-[5px] w-[33px] border-[#7cb0ea] bg-[#4a6272]">
        <svg width="14" height="14" viewBox="0 0 14 14" aria-hidden="true">
          <path d="M0 1.500L8 0v14l-8-1.500z" fill="#1d7445" />
          <path d="M2 4l4 6M6 4l-4 6" stroke="#fff" strokeWidth="1.300" />
          <path d="M9 1.500h4v11H9M9 4h4M9 7h4M9 10h4" fill="none" stroke="#e4f2ea" />
        </svg>
      </TaskButton>
      <div className="ml-auto flex items-center">
        <svg className="mr-[9px]" width="12" height="7" viewBox="0 0 12 7" fill="none" stroke="#fff" strokeWidth="1.200" aria-hidden="true"><path d="M1 6l5-5 5 5" /></svg>
        <svg className="mr-2" width="16" height="12" viewBox="0 0 16 12" fill="none" stroke="#fff" aria-hidden="true">
          <path d="M5.500 3.500h9v6h-9zM1.500 0v2M4.500 0v2M.5 2.500h5v2l-1 1.500h-3l-1-1.500zM3 6v4.500h2" />
          <path d="M7 5h6v3H7z" fill="#fff" />
        </svg>
        <svg className="mr-[9px]" width="14" height="15" viewBox="0 0 14 15" aria-hidden="true">
          <path d="M7 0l6.500 2v5.500C13.500 11 10 13.500 7 15 4 13.500.5 11 .5 7.500V2z" fill="#6fb3ef" />
          <path d="M2 3h10v4c0 2.500-2.500 4.500-5 6-2.500-1.500-5-3.500-5-6z" fill="#fff" />
          <path d="M3.500 5L7 8.500 10.500 5" fill="none" stroke="#2c76c9" strokeWidth="2" />
        </svg>
        <svg className="mr-[7px]" width="13" height="13" viewBox="0 0 13 13" fill="none" stroke="#c5ccd6" strokeWidth="1.200" aria-hidden="true">
          <path d="M1 12.500C1 6 5.500 1 12.500 1M4 12.500C4 8 7 4 12.500 4M7 12.500C7 9.500 9 7 12.500 7" />
          <path d="M10 11l2-1v2z" stroke="#fff" />
        </svg>
        <svg className="mr-[9px]" width="16" height="13" viewBox="0 0 16 13" fill="none" stroke="#e6eaf0" aria-hidden="true">
          <path d="M.5 4.500h2l3-3.500v11l-3-3.500h-2zM7.500 4.500q1.500 2 0 4M10 3q2.500 3.500 0 7" />
          <path d="M12.500 1.500q4 5 0 10" stroke="#76819a" />
        </svg>
        <span className="mr-[13px] text-[12px] leading-5">中</span>
        <svg className="mr-[16px]" width="15" height="14" viewBox="0 0 15 14" fill="none" aria-hidden="true">
          <rect width="15" height="14" rx="3" fill="#e4572e" />
          <path d="M11.500 3.500C8 2 4 2.500 4 4.500S11 6.500 11 9s-5 2.500-7.500 1" stroke="#fff" strokeWidth="2" />
        </svg>
        <span className="mr-2 rounded-r-full border-r border-[#68a5a4] pr-px text-[12px] leading-[14px]">44</span>
        <time className="text-[12px] leading-5">14:5</time>
      </div>
    </footer>
  );
}

export default function App() {
  return (
    <div className="flex h-screen flex-col overflow-hidden bg-[#e9e6ea] font-['Open_Sans','Noto_Sans_CJK_SC',sans-serif] text-[11px] leading-4">
      <div className="shrink-0 bg-[#217346]">
        <TitleBar />
        <TabBar />
      </div>
      <Ribbon />
      <FormulaBar />
      <Sheet />
      <SheetBar />
      <StatusBar />
      <TaskBar />
    </div>
  );
}
